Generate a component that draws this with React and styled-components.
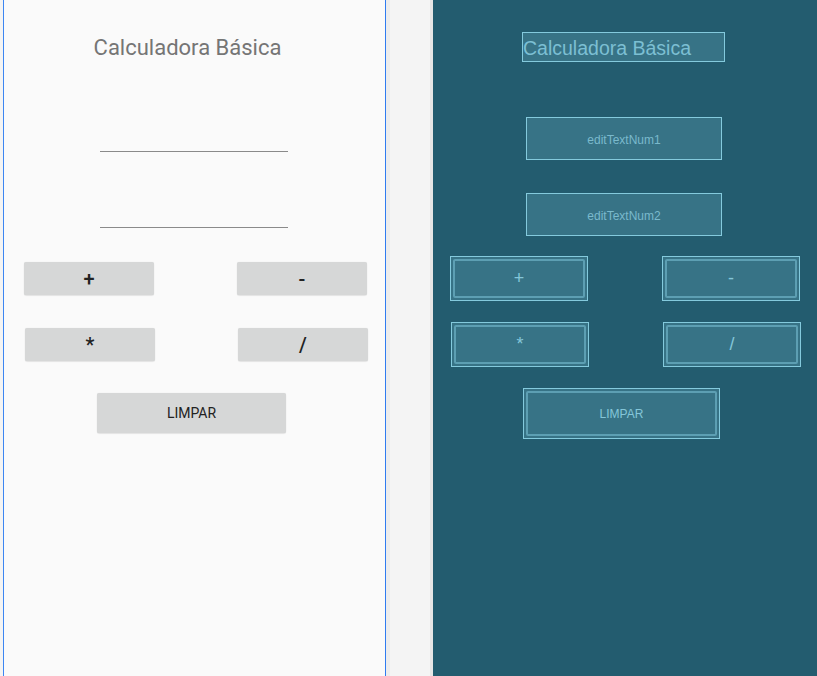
import React from "react";
import styled, { createGlobalStyle } from "styled-components";

const GlobalStyle = createGlobalStyle`
  html, body {
    margin: 0;
    padding: 0;
    background: #f4f4f4;
    overflow: hidden;
  }
`;

const ops = [
  [
    { label: "+", shift: 0 },
    { label: "-", shift: 0 },
  ],
  [
    { label: "*", shift: 1 },
    { label: "/", shift: 1 },
  ],
];

const App = () => {
  return (
    <>
      <GlobalStyle />
      <Editor>
        <Gutter />
        <DesignPanel>
          <DesignTitle>Calculadora Básica</DesignTitle>
          <EditLine />
          <EditLine />
          {ops.map((row, i) => (
            <DesignRow key={i} shift={row[0].shift} first={i === 0}>
              {row.map((op) => (
                <DesignButton key={op.label}>{op.label}</DesignButton>
              ))}
            </DesignRow>
          ))}
          <ClearButton>LIMPAR</ClearButton>
        </DesignPanel>
        <Gap />
        <Blueprint>
          <BpTitle>Calculadora Básica</BpTitle>
          <BpEdit>editTextNum1</BpEdit>
          <BpEdit second>editTextNum2</BpEdit>
          {ops.map((row, i) => (
            <BpRow key={i} shift={row[0].shift} first={i === 0}>
              {row.map((op) => (
                <BpButton key={op.label}>
                  <BpInner big>{op.label}</BpInner>
                </BpButton>
              ))}
            </BpRow>
          ))}
          <BpClear>
            <BpInner>LIMPAR</BpInner>
          </BpClear>
        </Blueprint>
      </Editor>
    </>
  );
};

export default App;

const Editor = styled.div`
  display: flex;
  width: 817px;
  height: 676px;
  overflow: hidden;
`;

const Gutter = styled.div`
  width: 3px;
  background: #f4f4f4;
  flex-shrink: 0;
`;

const DesignPanel = styled.div`
  width: 383px;
  flex-shrink: 0;
  box-sizing: border-box;
  background: #fafafa;
  border-left: 1px solid #3d86f2;
  border-right: 1px solid #2f7bf0;
  display: flex;
  flex-direction: column;
  font-family: Roboto, "Liberation Sans", sans-serif;
  color: #222;
`;

const DesignTitle = styled.div`
  margin: 34px 0 0 -14px;
  text-align: center;
  font-size: 22px;
  line-height: 27px;
  color: #757575;
`;

const EditLine = styled.div`
  width: 188px;
  height: 90px;
  margin-left: 96px;
  border-bottom: 1px solid #8a8a8a;
  & + & {
    height: 75px;
  }
`;

const DesignRow = styled.div`
  display: flex;
  gap: 83px;
  padding-left: ${(p) => 20 + p.shift}px;
  margin-top: ${(p) => (p.first ? 34 : 33)}px;
`;

const DesignButton = styled.div`
  width: 130px;
  height: 33px;
  background: #d6d7d7;
  border-radius: 2px;
  box-shadow: 0 0 1px rgba(0, 0, 0, 0.12), 0 1px 1px rgba(0, 0, 0, 0.08);
  display: flex;
  align-items: center;
  justify-content: center;
  font-size: 20px;
  font-weight: 500;
  color: #222;
`;

const ClearButton = styled.div`
  width: 189px;
  height: 40px;
  margin: 32px 0 0 93px;
  background: #d6d7d7;
  border-radius: 2px;
  box-shadow: 0 0 1px rgba(0, 0, 0, 0.12), 0 1px 1px rgba(0, 0, 0, 0.08);
  display: flex;
  align-items: center;
  justify-content: center;
  font-size: 14px;
  color: #222;
`;

const Gap = styled.div`
  width: 47px;
  flex-shrink: 0;
  background: #f4f4f4;
  box-sizing: border-box;
  border-left: 4px solid #ececec;
  border-right: 3px solid #e6e6e6;
`;

const Blueprint = styled.div`
  flex: 1;
  background: #235c6f;
  display: flex;
  flex-direction: column;
  font-family: "Liberation Sans", Arial, sans-serif;
  color: #80c3d6;
`;

const BpTitle = styled.div`
  width: 203px;
  height: 30px;
  box-sizing: border-box;
  margin: 32px 0 0 89px;
  border: 1px solid #84cadd;
  background: #377386;
  font-size: 19.5px;
  line-height: 30px;
  white-space: nowrap;
  color: #7cbfd3;
`;

const BpEdit = styled.div`
  width: 196px;
  height: 43px;
  box-sizing: border-box;
  margin: ${(p) => (p.second ? 33 : 55)}px 0 0 93px;
  border: 1px solid #84cadd;
  background: #377386;
  display: flex;
  align-items: center;
  justify-content: center;
  font-size: 12px;
  padding-top: 3px;
  color: #7ab9cc;
`;

const BpRow = styled.div`
  display: flex;
  gap: 74px;
  padding-left: ${(p) => 17 + p.shift}px;
  margin-top: ${(p) => (p.first ? 20 : 21)}px;
`;

const BpButton = styled.div`
  width: 138px;
  height: 45px;
  box-sizing: border-box;
  border: 1px solid #84cadd;
  background: #377386;
  padding: 2px;
  display: flex;
`;

const BpClear = styled(BpButton)`
  width: 197px;
  height: 51px;
  margin: 21px 0 0 90px;
`;

const BpInner = styled.div`
  flex: 1;
  box-sizing: border-box;
  border: 2px solid #5d9fb3;
  border-radius: 2px;
  display: flex;
  align-items: center;
  justify-content: center;
  font-size: ${(p) => (p.big ? 18 : 12)}px;
  color: #84c6d9;
`;
